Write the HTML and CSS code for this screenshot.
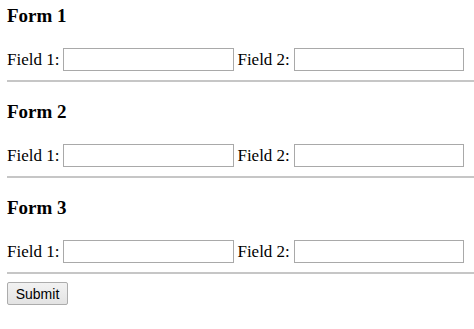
FILE: index.html
```html
<!DOCTYPE html>
<html>
<head>
<meta charset="utf-8">
<link rel="stylesheet" href="styles.css">
</head>
<body>
<form class="page">
  <section class="form-block">
    <h3 class="form-title">Form 1</h3>
    <div class="field-row">
      <label class="field-label">Field 1:</label>
      <input class="field-input field-input--first" type="text">
      <label class="field-label">Field 2:</label>
      <input class="field-input field-input--second" type="text">
    </div>
    <hr class="divider">
  </section>
  <section class="form-block">
    <h3 class="form-title">Form 2</h3>
    <div class="field-row">
      <label class="field-label">Field 1:</label>
      <input class="field-input field-input--first" type="text">
      <label class="field-label">Field 2:</label>
      <input class="field-input field-input--second" type="text">
    </div>
    <hr class="divider">
  </section>
  <section class="form-block">
    <h3 class="form-title">Form 3</h3>
    <div class="field-row">
      <label class="field-label">Field 1:</label>
      <input class="field-input field-input--first" type="text">
      <label class="field-label">Field 2:</label>
      <input class="field-input field-input--second" type="text">
    </div>
    <hr class="divider">
  </section>
  <button class="submit-btn" type="button">Submit</button>
</form>
</body>
</html>
```
FILE: styles.css
```css
html, body {
  margin: 0;
  padding: 0;
  background: #ffffff;
}
body {
  font-family: "Liberation Serif", "Times New Roman", serif;
  color: #000000;
}
.page {
  display: flex;
  flex-direction: column;
  align-items: flex-start;
  padding: 5px 0 0 7px;
  margin: 0;
}
.form-block {
  align-self: stretch;
  display: flex;
  flex-direction: column;
  align-items: flex-start;
}
.form-title {
  margin: 0;
  font-size: 19px;
  line-height: 22px;
  font-weight: bold;
}
.field-row {
  margin-top: 21px;
  display: flex;
  align-items: center;
  gap: 3.5px;
  height: 23px;
}
.field-label {
  font-size: 17px;
  line-height: 20px;
  padding-top: 1px;
}
.field-input {
  box-sizing: border-box;
  width: 170px;
  height: 23px;
  margin: 0;
  padding: 0 2px;
  border: 1px solid #a9a9a9;
  background: #ffffff;
  font-family: "Liberation Sans", Arial, sans-serif;
  font-size: 13px;
}
.field-input--first {
  width: 171px;
}
.field-input--second {
  margin-left: 1px;
}
.divider {
  align-self: stretch;
  margin: 9px 0 19px 0;
  height: 2px;
  border: none;
  background: #c6c6c6;
}
.form-block:last-of-type .divider {
  margin-bottom: 8px;
}
.submit-btn {
  box-sizing: border-box;
  width: 61px;
  height: 23px;
  margin: 0;
  padding: 0;
  border: 1px solid #acacac;
  border-radius: 2px;
  background: linear-gradient(#f2f2f2, #e3e3e3);
  font-family: "Liberation Sans", Arial, sans-serif;
  font-size: 14px;
  color: #000000;
}
```
